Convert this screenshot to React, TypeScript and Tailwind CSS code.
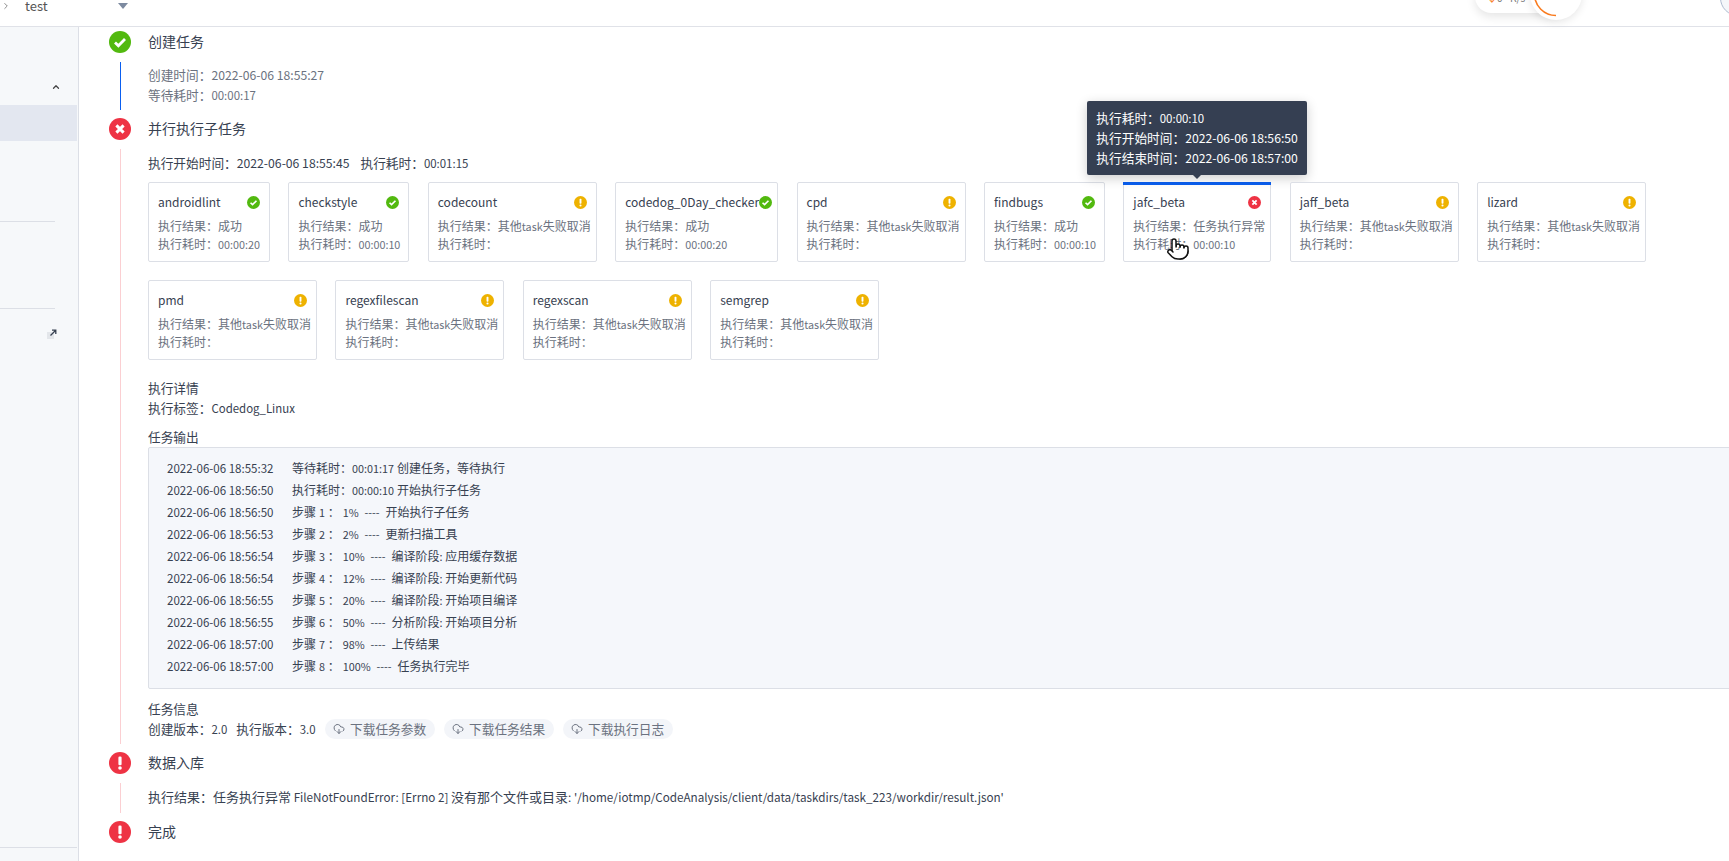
import { ChevronRight, ChevronUp, CloudDownload, Pointer } from 'lucide-react';

type Status = 'ok' | 'warn' | 'fail';

interface SubTask {
  name: string;
  width: string;
  status: Status;
  result: string;
  cost: string;
  active?: boolean;
}

const CANCELED = '其他task失败取消';

const firstRow: SubTask[] = [
  { name: 'androidlint', width: 'w-[122px]', status: 'ok', result: '成功', cost: '00:00:20' },
  { name: 'checkstyle', width: 'w-[121px]', status: 'ok', result: '成功', cost: '00:00:10' },
  { name: 'codecount', width: 'w-[169px]', status: 'warn', result: CANCELED, cost: '' },
  { name: 'codedog_0Day_checker', width: 'w-[163px]', status: 'ok', result: '成功', cost: '00:00:20' },
  { name: 'cpd', width: 'w-[169px]', status: 'warn', result: CANCELED, cost: '' },
  { name: 'findbugs', width: 'w-[121px]', status: 'ok', result: '成功', cost: '00:00:10' },
  { name: 'jafc_beta', width: 'w-[148px]', status: 'fail', result: '任务执行异常', cost: '00:00:10', active: true },
  { name: 'jaff_beta', width: 'w-[169px]', status: 'warn', result: CANCELED, cost: '' },
  { name: 'lizard', width: 'w-[169px]', status: 'warn', result: CANCELED, cost: '' },
];

const secondRow: SubTask[] = [
  { name: 'pmd', width: 'w-[169px]', status: 'warn', result: CANCELED, cost: '' },
  { name: 'regexfilescan', width: 'w-[169px]', status: 'warn', result: CANCELED, cost: '' },
  { name: 'regexscan', width: 'w-[169px]', status: 'warn', result: CANCELED, cost: '' },
  { name: 'semgrep', width: 'w-[169px]', status: 'warn', result: CANCELED, cost: '' },
];

const logs = [
  ['2022-06-06 18:55:32', '等待耗时：00:01:17 创建任务，等待执行'],
  ['2022-06-06 18:56:50', '执行耗时：00:00:10 开始执行子任务'],
  ['2022-06-06 18:56:50', '步骤 1 ： 1%  ----  开始执行子任务'],
  ['2022-06-06 18:56:53', '步骤 2 ： 2%  ----  更新扫描工具'],
  ['2022-06-06 18:56:54', '步骤 3 ： 10%  ----  编译阶段: 应用缓存数据'],
  ['2022-06-06 18:56:54', '步骤 4 ： 12%  ----  编译阶段: 开始更新代码'],
  ['2022-06-06 18:56:55', '步骤 5 ： 20%  ----  编译阶段: 开始项目编译'],
  ['2022-06-06 18:56:55', '步骤 6 ： 50%  ----  分析阶段: 开始项目分析'],
  ['2022-06-06 18:57:00', '步骤 7 ： 98%  ----  上传结果'],
  ['2022-06-06 18:57:00', '步骤 8 ： 100%  ----  任务执行完毕'],
];

// Latin runs sit narrower than the CJK font's own Latin, so they get a slightly smaller size
function Mixed({ text }: { text: string }) {
  const parts = text.split(/(\d{4}-\d{2}-\d{2} [\d:]+|[\x00-\x7f]+)/);
  return (
    <>
      {parts.map((part, i) =>
        i % 2 === 0 ? (
          part
        ) : (
          <span key={i} className={part.length === 19 && /^\d{4}-/.test(part) ? 'text-[0.96em]' : 'text-[0.9em]'}>
            {part}
          </span>
        ),
      )}
    </>
  );
}

function StatusIcon({ status, size }: { status: Status | 'alert'; size: number }) {
  const fill = status === 'ok' ? '#52b90f' : status === 'warn' ? '#eeb200' : '#ee3344';
  return (
    <svg width={size} height={size} viewBox="0 0 22 22" className="shrink-0">
      <circle cx="11" cy="11" r="11" fill={fill} />
      {status === 'ok' && <path d="M6 11.4l3.4 3.3L16 8" fill="none" stroke="#fff" strokeWidth="2.8" />}
      {status === 'fail' && <path d="M7.4 7.4l7.2 7.2M14.6 7.4l-7.2 7.2" fill="none" stroke="#fff" strokeWidth="3" />}
      {(status === 'warn' || status === 'alert') && (
        <>
          <rect x="9.4" y="4.6" width="3.2" height="8.6" rx="1.2" fill="#fff" />
          <circle cx="11" cy="16" r="1.8" fill="#fff" />
        </>
      )}
    </svg>
  );
}

function TaskCard({ task }: { task: SubTask }) {
  return (
    <div className={`relative h-20 shrink-0 rounded-[2px] border border-[#dcdfe6] bg-white px-[9px] pt-[9px] ${task.width}`}>
      {task.active && <div className="absolute -left-px -right-px -top-px h-[3px] bg-[#0a5ff0]" />}
      <div className="flex h-5 items-center justify-between">
        <span className="whitespace-nowrap text-xs text-[#374151]">{task.name}</span>
        <StatusIcon status={task.status} size={13} />
      </div>
      <div className="mt-[5px] whitespace-nowrap text-xs leading-[18px] text-[#6b7280]">
        <Mixed text={`执行结果：${task.result}`} />
      </div>
      <div className="whitespace-nowrap text-xs leading-[18px] text-[#6b7280]">
        <Mixed text={`执行耗时：${task.cost}`} />
      </div>
      {task.active && (
        <>
          <div className="absolute bottom-[calc(100%+8px)] left-1/2 w-[220px] -translate-x-1/2 rounded-[2px] bg-[#353f52] px-[9px] py-[7px] text-[12.7px] leading-5 whitespace-nowrap text-white shadow-[0_3px_12px_rgba(0,0,0,0.2)]">
            <div>
              <Mixed text="执行耗时：00:00:10" />
            </div>
            <div>
              <Mixed text="执行开始时间：2022-06-06 18:56:50" />
            </div>
            <div>
              <Mixed text="执行结束时间：2022-06-06 18:57:00" />
            </div>
            <div className="absolute left-1/2 top-full h-0 w-0 -translate-x-1/2 border-x-4 border-t-4 border-x-transparent border-t-[#353f52]" />
          </div>
          <Pointer size={24} strokeWidth={1.5} fill="#fff" className="absolute left-[42px] top-[54px] text-[#111]" />
        </>
      )}
    </div>
  );
}

function DownloadPill({ label }: { label: string }) {
  return (
    <span className="flex h-5 w-[110px] items-center justify-center gap-[5px] rounded-full bg-[#f3f5f9] text-[12.7px] text-[#6b7280]">
      <CloudDownload size={12} />
      {label}
    </span>
  );
}

function Step({
  status,
  title,
  line,
  children,
}: {
  status: Status | 'alert';
  title: string;
  line?: string;
  children?: React.ReactNode;
}) {
  return (
    <div className="flex gap-[17px]">
      <div className="flex w-[22px] shrink-0 flex-col items-center">
        <StatusIcon status={status} size={22} />
        {line && <div className={`mb-2 mt-[9px] w-px flex-1 ${line}`} />}
      </div>
      <div className="min-w-0 flex-1">
        <div className="h-[22px] text-sm leading-[21px] text-[#374151]">{title}</div>
        {children}
      </div>
    </div>
  );
}

export default function App() {
  return (
    <div
      className="flex h-[861px] w-[1729px] flex-col overflow-hidden bg-white"
      style={{ fontFamily: '"Noto Sans CJK SC", sans-serif' }}
    >
      {/* Header, scrolled partly out of view */}
      <header className="relative h-[27px] shrink-0 border-b border-[#e0e2e8]">
        <div className="flex h-[11px] items-center pl-[1px]">
          <ChevronRight size={10} className="text-[#777]" />
          <span className="ml-3.5 text-[13px] leading-none text-[#555]">test</span>
          <span className="ml-[70px] h-0 w-0 border-x-[5px] border-t-[6px] border-x-transparent border-t-[#7d8aa0]" />
        </div>
        <div className="absolute left-[1475px] top-[-20px] h-[33px] w-[90px] rounded-[18px] bg-white shadow-[0_4px_10px_rgba(0,0,0,0.1)]">
          <span className="absolute left-[12px] top-[13px] text-[10px] leading-[10px] text-[#f97b1f]">↓</span>
          <span className="absolute left-[22px] top-[13px] text-[10px] leading-[10px] text-[#777]">0</span>
          <span className="absolute left-[35px] top-[13px] text-[10px] leading-[10px] text-[#777]">K/s</span>
        </div>
        <div className="absolute left-[1530px] top-[-32px] flex h-[52px] w-[52px] items-center justify-center rounded-full bg-white shadow-[0_2px_8px_rgba(0,0,0,0.1)]">
          <span className="mt-[-4px] text-base font-semibold text-[#222]">53%</span>
          <svg width="52" height="52" viewBox="0 0 52 52" className="absolute left-0 top-0">
            <path d="M4.5 26A21.5 21.5 0 0 0 26 47.5" fill="none" stroke="#f97b1f" strokeWidth="1.6" />
          </svg>
        </div>
        <div className="absolute left-[1720px] top-[-20px] h-9 w-9 rounded-full border border-[#aebbd0] bg-[#f5f7fa]" />
      </header>

      <div className="flex min-h-0 flex-1">
        {/* Sidebar */}
        <aside className="flex w-[79px] shrink-0 flex-col border-r border-[#dcdfe6] bg-[#f6f8fa] pr-px">
          <div className="flex h-[78px] justify-end pr-[16px] pt-[55px]">
            <ChevronUp size={10} strokeWidth={3} className="text-[#444]" />
          </div>
          <div className="h-9 bg-[#e3e7f0]" />
          <div className="mt-[80px] h-px w-[55px] bg-[#dcdfe6]" />
          <div className="mt-[86px] h-px w-[55px] bg-[#dcdfe6]" />
          <svg width="10" height="10" viewBox="0 0 10 10" className="ml-[47px] mt-[20px]">
            <rect x="0" y="3" width="7" height="7" fill="#e3e6ea" />
            <path d="M3.5 6.5L8.5 1.5M5 1.2h3.8V5" fill="none" stroke="#374151" strokeWidth="1.3" />
          </svg>
          <div className="mt-auto h-[14px] border-t border-[#dcdfe6]" />
        </aside>

        {/* Timeline */}
        <main className="min-w-0 flex-1 overflow-hidden pl-[30px] pt-1">
          <Step status="ok" title="创建任务" line="bg-[#0a5ff0]">
            <div className="pb-[13px] pt-3 text-[12.7px] leading-5 text-[#6b7280]">
              <div>
                <Mixed text="创建时间：2022-06-06 18:55:27" />
              </div>
              <div>
                <Mixed text="等待耗时：00:00:17" />
              </div>
            </div>
          </Step>

          <Step status="fail" title="并行执行子任务" line="bg-[#fbcfd2]">
            <div className="mt-[13px] text-[12.7px] leading-5 text-[#374151]">
              <Mixed text="执行开始时间：2022-06-06 18:55:45" />
              <span className="ml-[11px]">
                <Mixed text="执行耗时：00:01:15" />
              </span>
            </div>
            <div className="mt-[9px] flex gap-[18.4px]">
              {firstRow.map((task) => (
                <TaskCard key={task.name} task={task} />
              ))}
            </div>
            <div className="mt-[18px] flex gap-[18.4px]">
              {secondRow.map((task) => (
                <TaskCard key={task.name} task={task} />
              ))}
            </div>

            <div className="mt-[18px] text-[12.7px] leading-5 text-[#374151]">
              <div>执行详情</div>
              <div>
                <Mixed text="执行标签：Codedog_Linux" />
              </div>
            </div>

            <div className="mt-[9px] text-[12.7px] leading-5 text-[#374151]">任务输出</div>
            <div className="h-[242px] w-[1700px] rounded-[2px] border border-[#dcdfe6] bg-[#f5f7fb] pl-[18px] pt-[9px]">
              {logs.map(([time, message], i) => (
                <div key={i} className="flex text-xs leading-[22px] text-[#374151]">
                  <span className="w-[125px] shrink-0">
                    <Mixed text={time} />
                  </span>
                  <span className="whitespace-pre [word-spacing:0.5px]">
                    <Mixed text={message} />
                  </span>
                </div>
              ))}
            </div>

            <div className="mt-[10px] pb-[13px] text-[12.7px] leading-5 text-[#374151]">
              <div>任务信息</div>
              <div className="flex items-center">
                <span>
                  <Mixed text="创建版本：2.0" />
                </span>
                <span className="ml-[9px]">
                  <Mixed text="执行版本：3.0" />
                </span>
                <div className="ml-[9px] flex gap-[9px]">
                  <DownloadPill label="下载任务参数" />
                  <DownloadPill label="下载任务结果" />
                  <DownloadPill label="下载执行日志" />
                </div>
              </div>
            </div>
          </Step>

          <Step status="alert" title="数据入库" line="bg-[#fbcfd2]">
            <div className="mt-[13px] pb-[14px] text-[13px] leading-5 whitespace-nowrap text-[#374151]">
              <Mixed text="执行结果：任务执行异常 FileNotFoundError: [Errno 2] 没有那个文件或目录: '/home/iotmp/CodeAnalysis/client/data/taskdirs/task_223/workdir/result.json'" />
            </div>
          </Step>

          <Step status="alert" title="完成" />
        </main>
      </div>
    </div>
  );
}
